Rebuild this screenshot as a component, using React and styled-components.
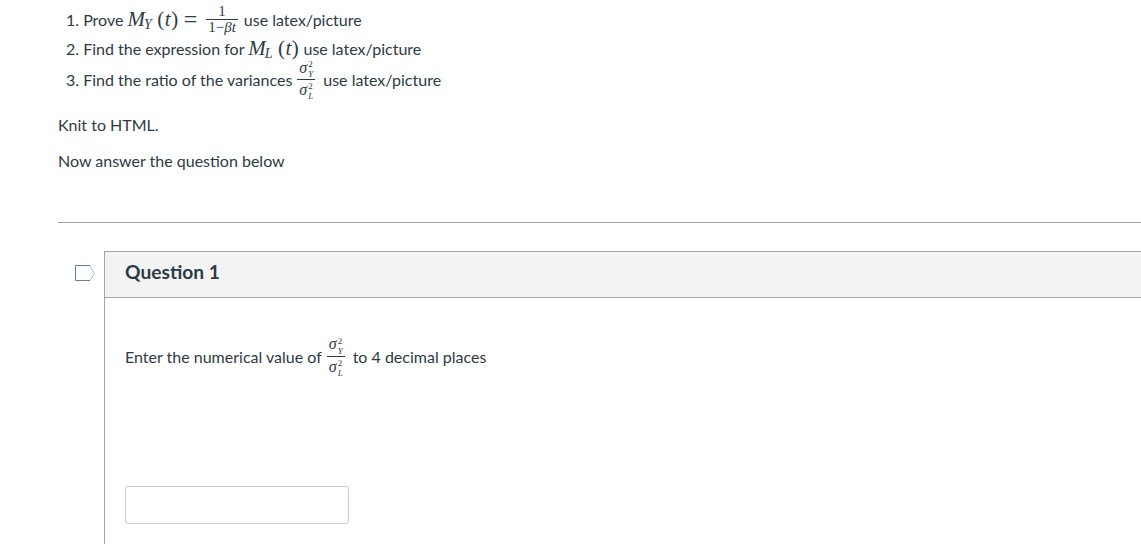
import styled, { createGlobalStyle } from 'styled-components'

const GlobalStyle = createGlobalStyle`
    html, body {
        margin: 0;
        height: 544px;
        overflow: hidden;
        background: #fff;
        color: #2d3b45;
        font-family: Lato, "Liberation Sans", sans-serif;
        font-size: 16px;
    }
`
const Page = styled.div`
    height: 544px;
    overflow: hidden;
    display: flex;
    flex-direction: column;
    padding-left: 58px;
`
const Steps = styled.ol`
    list-style: none;
    margin: 0;
    padding: 5px 0 0 8px;
    display: flex;
    flex-direction: column;
`
const Step = styled.li`
    height: ${(p) => p.$height}px;
    display: flex;
    align-items: center;
    white-space: pre;
`
const Para = styled.p`
    margin: ${(p) => p.$top}px 0 0;
    line-height: 24px;
`
const Rule = styled.hr`
    border: 0;
    border-top: 1px solid #a5a5a5;
    margin: 49px 0 0;
`
const QuestionRow = styled.section`
    display: flex;
    margin-top: 28px;
    margin-left: 16px;
    flex: 1;
`
const FlagCol = styled.div`
    width: 30px;
    padding-top: 14px;
    flex: none;
`
const Question = styled.div`
    flex: 1;
    border-left: 1px solid #a5a5a5;
    border-top: 1px solid #a5a5a5;
    display: flex;
    flex-direction: column;
`
const QuestionHead = styled.header`
    box-sizing: border-box;
    height: 46px;
    background: #f3f3f3;
    border-bottom: 1px solid #a5a5a5;
    padding: 0 0 6px 20px;
    display: flex;
    align-items: center;
    font-size: 19.2px;
    font-weight: 700;
`
const QuestionBody = styled.div`
    padding: 37px 20px 0;
    display: flex;
    flex-direction: column;
`
const Prompt = styled.div`
    display: flex;
    align-items: center;
    white-space: pre;
    height: 42px;
`
const AnswerInput = styled.input`
    box-sizing: border-box;
    width: 224px;
    height: 38px;
    margin-top: 109px;
    border: 1px solid #c7cdd1;
    border-radius: 3px;
    background: #fff;
    flex: none;
`
const Math = styled.span`
    font-family: "Liberation Serif", "DejaVu Serif", serif;
    font-size: ${(p) => p.$size || 21}px;
    color: #2d3b45;
    display: inline-flex;
    align-items: center;
    margin: ${(p) => p.$margin || '0'};
`
const Ital = styled.i`
    font-style: italic;
`
const Sub = styled.i`
    font-size: 14px;
    font-style: italic;
    align-self: flex-end;
    margin: 0 5px 0 -1px;
    position: relative;
    top: 1px;
`
const Paren = styled.span`
    margin: 0 0.5px;
`
const Frac = styled.span`
    display: inline-flex;
    flex-direction: column;
    align-items: center;
    margin: ${(p) => p.$margin};
    font-family: "Liberation Serif", "DejaVu Serif", serif;
    font-size: ${(p) => p.$size}px;
    line-height: ${(p) => p.$line}px;
`
const Num = styled.span`
    display: block;
    padding: 0 2px 1px;
    white-space: nowrap;
`
const Den = styled.span`
    display: block;
    border-top: 1px solid #2d3b45;
    padding: 1px 2px 0;
    white-space: nowrap;
    align-self: stretch;
    text-align: center;
`
const SupSub = styled.span`
    display: inline-flex;
    flex-direction: column;
    justify-content: center;
    vertical-align: middle;
    height: 18px;
    font-size: 9px;
    line-height: 10px;
    text-align: left;
    margin-left: 1px;
`

const Sigma = ({ letter }) => (
    <>
        <Ital>σ</Ital>
        <SupSub>
            <span>2</span>
            <Ital>{letter}</Ital>
        </SupSub>
    </>
)

const VarianceRatio = () => (
    <Frac $margin="0 8px 0 5px" $size={16} $line={18}>
        <Num><Sigma letter="Y" /></Num>
        <Den><Sigma letter="L" /></Den>
    </Frac>
)

const Mgf = ({ letter }) => (
    <Math>
        <Ital>M</Ital>
        <Sub>{letter}</Sub>
        <Paren>(</Paren><Ital>t</Ital><Paren>)</Paren>
    </Math>
)

const FlagIcon = () => (
    <svg width="22" height="17" viewBox="0 0 22 17" fill="none">
        <path d="M16 1 L20.5 8.5 L16 15.5" stroke="#a9bccb" strokeWidth="1" />
        <path d="M16 15.5 H1.5 V0.5 H16" stroke="#5d83a0" strokeWidth="1" />
    </svg>
)

export default function App() {
    return (
        <>
            <GlobalStyle />
            <Page>
                <Steps>
                    <Step $height={29}>
                        1. Prove <Mgf letter="Y" /><Math $size={24} $margin="0 9px 0 5px">=</Math>
                        <Frac $margin="0 6px 0 0" $size={15} $line={13}>
                            <Num>1</Num>
                            <Den>1−<Ital>βt</Ital></Den>
                        </Frac>
                        use latex/picture
                    </Step>
                    <Step $height={29}>
                        2. Find the expression for <Mgf letter="L" /> use latex/picture
                    </Step>
                    <Step $height={33}>
                        3. Find the ratio of the variances<VarianceRatio />use latex/picture
                    </Step>
                </Steps>
                <Para $top={17}>Knit to HTML.</Para>
                <Para $top={12}>Now answer the question below</Para>
                <Rule />
                <QuestionRow>
                    <FlagCol><FlagIcon /></FlagCol>
                    <Question>
                        <QuestionHead>Question 1</QuestionHead>
                        <QuestionBody>
                            <Prompt>
                                Enter the numerical value of<VarianceRatio />to 4 decimal places
                            </Prompt>
                            <AnswerInput type="text" />
                        </QuestionBody>
                    </Question>
                </QuestionRow>
            </Page>
        </>
    )
}
